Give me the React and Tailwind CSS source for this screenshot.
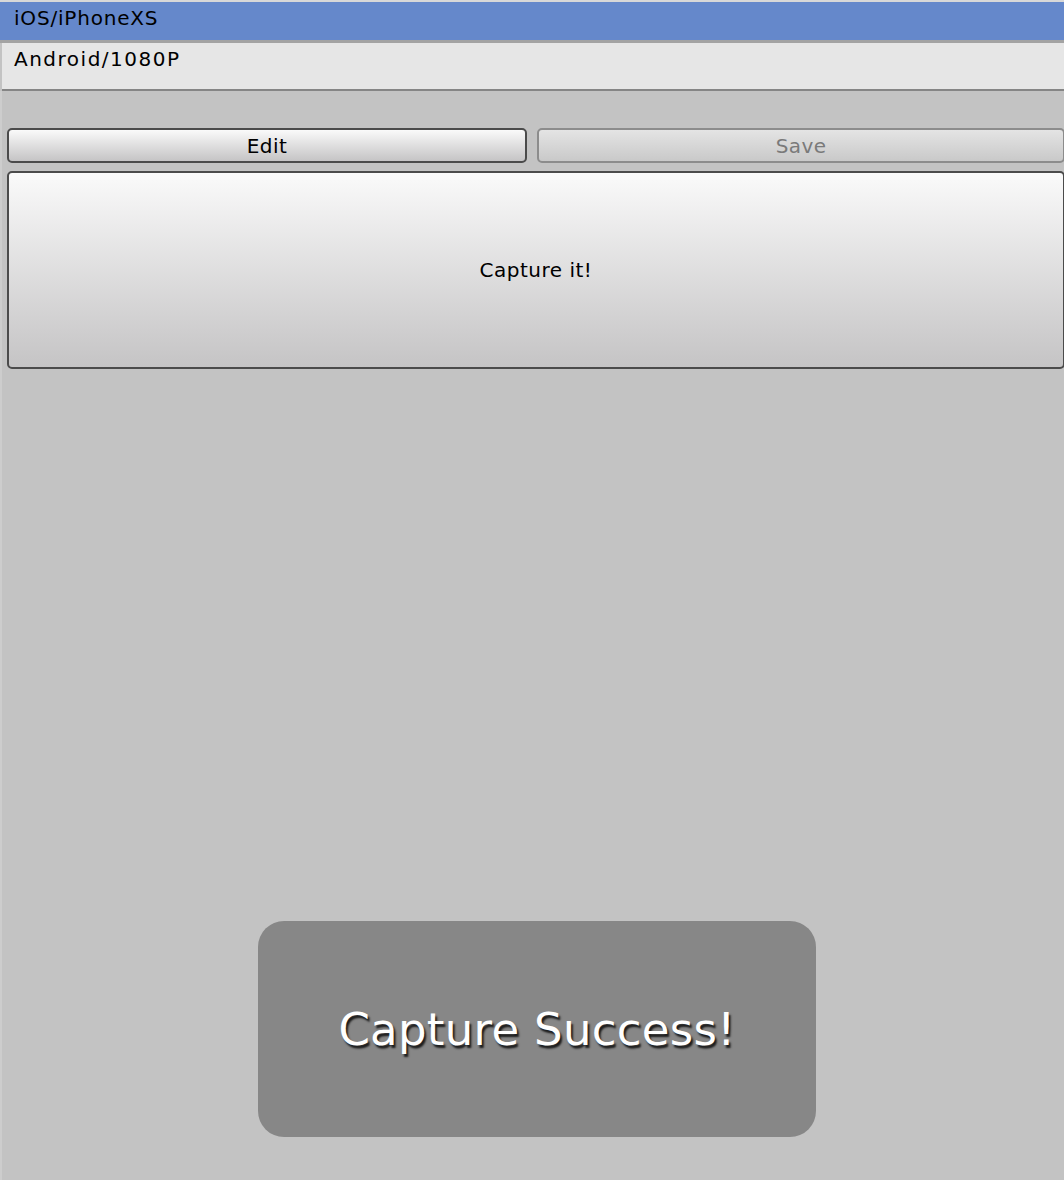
const font = { fontFamily: '"DejaVu Sans", "Lucida Grande", Verdana, sans-serif' };

const Button = ({ label, disabled, className }) => (
  <button
    disabled={disabled}
    className={
      "flex shrink-0 items-center justify-center rounded-[5px] border-2 text-[20px] leading-none " +
      (disabled
        ? "border-[#8c8c8c] bg-gradient-to-b from-[#e4e4e4] to-[#c9c9c9] text-[#7a7a7a] "
        : "border-[#4b4b4b] bg-gradient-to-b from-[#fafafa] to-[#c5c4c5] text-black ") +
      className
    }
  >
    {label}
  </button>
);

export default function App() {
  return (
    <div style={font} className="relative h-[1180px] w-[1064px] overflow-hidden bg-[#c3c3c3]">
      <div className="flex flex-col">
        <div className="h-[2px] bg-[#d8d8d8]" />
        <div className="h-[38px] bg-[#6588cb] px-[14px] pt-[4px] text-[20px] leading-[24px] tracking-[0.8px] text-black">
          iOS/iPhoneXS
        </div>
        <div className="h-[3px] bg-[#a3a3a3]" />
        <div className="ml-[2px] h-[46px] bg-[#e6e6e6] px-[12px] pt-[4px] text-[20px] leading-[24px] tracking-[1.5px] text-black">
          Android/1080P
        </div>
        <div className="ml-[2px] h-[2px] bg-[#858585]" />
      </div>

      <div className="flex h-[1089px]">
        <div className="w-[2px] shrink-0 bg-[#cdcdcd]" />
        <div className="flex w-[1070px] shrink-0 flex-col gap-[8px] pl-[5px] pt-[37px]">
          <div className="flex gap-[10px]">
            <Button label="Edit" className="h-[35px] w-[520px] tracking-[0.4px]" />
            <Button label="Save" disabled className="h-[35px] w-[528px] tracking-[0.4px]" />
          </div>
          <Button label="Capture it!" className="h-[198px] w-[1058px] tracking-[0.5px]" />
        </div>
      </div>

      <div className="absolute left-[258px] top-[921px] flex h-[216px] w-[558px] items-center justify-center rounded-[26px] bg-[#878787]">
        <span className="text-[45px] leading-none tracking-[0.3px] text-white [text-shadow:2px_3px_2px_rgba(0,0,0,0.8)]">
          Capture Success!
        </span>
      </div>
    </div>
  );
}
